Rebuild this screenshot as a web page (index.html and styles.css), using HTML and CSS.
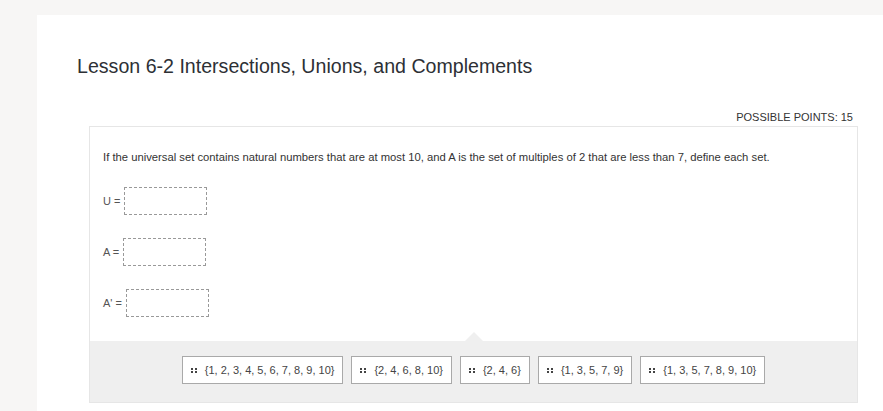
FILE: index.html
```html
<!DOCTYPE html>
<html>
<head>
<meta charset="utf-8">
<link rel="stylesheet" href="styles.css">
</head>
<body>
<div class="card">
  <h1 class="title">Lesson 6-2 Intersections, Unions, and Complements</h1>
  <div class="quiz">
    <div class="points">POSSIBLE POINTS: 15</div>
    <div class="question">
      <div class="body">
        <p class="prompt">If the universal set contains natural numbers that are at most 10, and A is the set of multiples of 2 that are less than 7, define each set.</p>
        <div class="row"><span class="label">U =</span><span class="drop"></span></div>
        <div class="row"><span class="label">A =</span><span class="drop"></span></div>
        <div class="row"><span class="label">A' =</span><span class="drop"></span></div>
      </div>
      <div class="bank">
        <span class="notch"></span>
        <div class="chip"><svg class="grip" width="6" height="5" viewBox="0 0 6 5"><rect x="0" y="0" width="2" height="2"/><rect x="4" y="0" width="2" height="2"/><rect x="0" y="3" width="2" height="2"/><rect x="4" y="3" width="2" height="2"/></svg>{1, 2, 3, 4, 5, 6, 7, 8, 9, 10}</div>
        <div class="chip"><svg class="grip" width="6" height="5" viewBox="0 0 6 5"><rect x="0" y="0" width="2" height="2"/><rect x="4" y="0" width="2" height="2"/><rect x="0" y="3" width="2" height="2"/><rect x="4" y="3" width="2" height="2"/></svg>{2, 4, 6, 8, 10}</div>
        <div class="chip"><svg class="grip" width="6" height="5" viewBox="0 0 6 5"><rect x="0" y="0" width="2" height="2"/><rect x="4" y="0" width="2" height="2"/><rect x="0" y="3" width="2" height="2"/><rect x="4" y="3" width="2" height="2"/></svg>{2, 4, 6}</div>
        <div class="chip"><svg class="grip" width="6" height="5" viewBox="0 0 6 5"><rect x="0" y="0" width="2" height="2"/><rect x="4" y="0" width="2" height="2"/><rect x="0" y="3" width="2" height="2"/><rect x="4" y="3" width="2" height="2"/></svg>{1, 3, 5, 7, 9}</div>
        <div class="chip"><svg class="grip" width="6" height="5" viewBox="0 0 6 5"><rect x="0" y="0" width="2" height="2"/><rect x="4" y="0" width="2" height="2"/><rect x="0" y="3" width="2" height="2"/><rect x="4" y="3" width="2" height="2"/></svg>{1, 3, 5, 7, 8, 9, 10}</div>
      </div>
    </div>
  </div>
</div>
</body>
</html>
```
FILE: styles.css
```css
html, body {
  margin: 0;
  padding: 0;
}
body {
  background: #f7f6f5;
  font-family: "Liberation Sans", Arial, sans-serif;
  color: #333;
  height: 411px;
  overflow: hidden;
}
.card {
  margin: 15px 0 0 37px;
  background: #fff;
  padding: 36px 0 20px 40px;
  min-height: 400px;
  box-sizing: border-box;
}
.title {
  margin: 0;
  font-size: 19.6px;
  font-weight: normal;
  line-height: 30px;
  color: #2d3035;
}
.quiz {
  margin: 29px 25px 0 12px;
}
.points {
  text-align: right;
  font-size: 11px;
  line-height: 14px;
  padding-right: 5px;
  margin-bottom: 2px;
  color: #333;
}
.question {
  border: 1px solid #e6e6e6;
}
.body {
  padding: 23px 13px 13px 13px;
  background: #fff;
}
.prompt {
  margin: 0 0 23px 0;
  font-size: 11.25px;
  line-height: 14px;
  color: #333;
}
.row {
  display: flex;
  align-items: center;
  margin-bottom: 23px;
}
.row:last-child {
  margin-bottom: 11px;
}
.label {
  font-size: 11px;
  color: #555;
  margin-right: 4px;
}
.drop {
  display: inline-block;
  width: 81px;
  height: 26px;
  border: 1px dashed #999;
}
.bank {
  position: relative;
  background: #efefef;
  display: flex;
  justify-content: center;
  gap: 8px;
  padding: 15px 0 18px 0;
}
.notch {
  position: absolute;
  top: -9px;
  left: 50%;
  margin-left: -9px;
  width: 0;
  height: 0;
  border-left: 9px solid transparent;
  border-right: 9px solid transparent;
  border-bottom: 9px solid #efefef;
}
.chip {
  display: flex;
  align-items: center;
  height: 26px;
  padding: 0 8px 0 8px;
  border: 1px solid #a9a9a9;
  background: #fff;
  font-size: 11px;
  color: #444;
}
.grip {
  fill: #444;
  margin-right: 8px;
}
```
